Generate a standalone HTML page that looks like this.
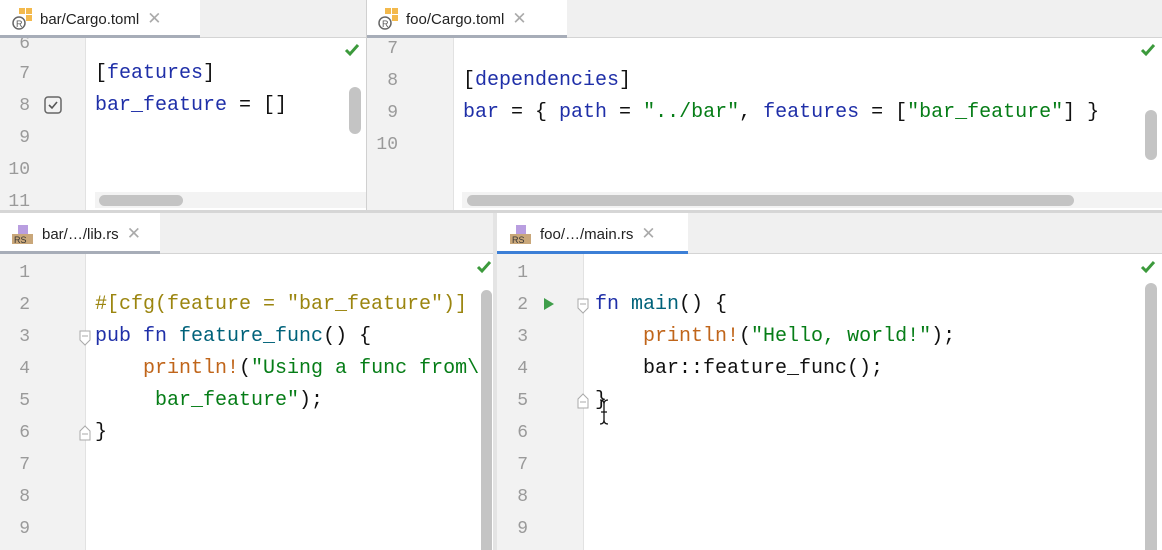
<!DOCTYPE html>
<html><head><meta charset="utf-8"><style>
*{margin:0;padding:0;box-sizing:border-box}
html,body{width:1162px;height:550px;overflow:hidden}
body{background:#fff;position:relative;font-family:"Liberation Sans",sans-serif}
.a{position:absolute}
.tabbar{background:#f0f0f0;border-bottom:1px solid #d4d4d4}
.tab{position:absolute;font-size:15px;color:#222;display:flex;align-items:center}
.gut{background:#f2f2f2;border-right:1px solid #e2e2e2}
.ln{position:absolute;font-family:"Liberation Mono",monospace;font-size:18px;color:#9a9a9a;text-align:right;width:30px;line-height:32px}
.code{position:absolute;font-family:"Liberation Mono",monospace;font-size:20px;line-height:32px;white-space:pre;color:#111}
.k{color:#1f2fa8}.f{color:#00627a}.s{color:#067d17}.m{color:#c0651a}.at{color:#9b850f}
.thumb{position:absolute;background:#c4c4c4;border-radius:6px}
.x{color:#aaa;font-size:17px;margin-left:8px}
.chk{position:absolute}
</style></head><body>
<div class="a tabbar" style="left:0;top:0;width:1162px;height:38px"></div>
<div class="a" style="left:0;top:0;width:200px;height:38px;background:#fff;border-bottom:3px solid #a7adb8"></div>
<div class="a" style="left:366px;top:0;width:201px;height:38px;background:#fff;border-bottom:3px solid #a7adb8"></div>
<div class="a" style="left:366px;top:0;width:1px;height:210px;background:#d0d0d0"></div>
<div class="tab" style="left:12px;top:8px"><svg width="22" height="22"><rect x="7" y="0" width="6" height="6" fill="#f3b94c"/><rect x="14" y="0" width="6" height="6" fill="#f3b94c"/><rect x="14" y="7" width="6" height="6" fill="#f3b94c"/><circle cx="7" cy="15" r="6" fill="#fff" stroke="#666" stroke-width="1.5"/><text x="4" y="19" font-size="9" fill="#555" font-family="Liberation Sans">R</text></svg><span style="margin-left:6px">bar/Cargo.toml</span><span class="x">✕</span></div>
<div class="tab" style="left:378px;top:8px"><svg width="22" height="22"><rect x="7" y="0" width="6" height="6" fill="#f3b94c"/><rect x="14" y="0" width="6" height="6" fill="#f3b94c"/><rect x="14" y="7" width="6" height="6" fill="#f3b94c"/><circle cx="7" cy="15" r="6" fill="#fff" stroke="#666" stroke-width="1.5"/><text x="4" y="19" font-size="9" fill="#555" font-family="Liberation Sans">R</text></svg><span style="margin-left:6px">foo/Cargo.toml</span><span class="x">✕</span></div>

<div class="a gut" style="left:0;top:38px;width:86px;height:172px"></div>
<div class="a" style="left:0;top:38px;width:366px;height:172px;overflow:hidden">
 <div class="ln" style="left:0;top:-10px">6</div>
 <div class="ln" style="left:0;top:20px">7</div>
 <div class="ln" style="left:0;top:52px">8</div>
 <div class="ln" style="left:0;top:84px">9</div>
 <div class="ln" style="left:0;top:116px">10</div>
 <div class="ln" style="left:0;top:148px">11</div>
</div>
<svg class="a" style="left:44px;top:96px" width="19" height="19"><rect x="1" y="1" width="16" height="16" rx="3" fill="none" stroke="#666" stroke-width="1.5"/><path d="M5 9l3 3 5-6" fill="none" stroke="#555" stroke-width="1.6"/></svg>
<div class="code" style="left:95px;top:58px">[<span class="k">features</span>]
<span class="k">bar_feature</span> = []</div>
<svg class="chk" style="left:344px;top:43px" width="16" height="14"><path d="M2 7l4 4 8-9" fill="none" stroke="#3c9a3c" stroke-width="3"/></svg>
<div class="thumb" style="left:349px;top:87px;width:12px;height:47px"></div>
<div class="a" style="left:95px;top:192px;width:271px;height:16px;background:#f3f3f3"></div>
<div class="thumb" style="left:99px;top:195px;width:84px;height:11px"></div>

<div class="a gut" style="left:367px;top:38px;width:87px;height:172px"></div>
<div class="a" style="left:367px;top:38px;width:87px;height:172px;overflow:hidden">
<div class="ln" style="left:1px;top:-5px">7</div>
<div class="ln" style="left:1px;top:27px">8</div>
<div class="ln" style="left:1px;top:59px">9</div>
<div class="ln" style="left:1px;top:91px">10</div>
</div>
<div class="code" style="left:463px;top:65px">[<span class="k">dependencies</span>]
<span class="k">bar</span> = { <span class="k">path</span> = <span class="s">"../bar"</span>, <span class="k">features</span> = [<span class="s">"bar_feature"</span>] }</div>
<svg class="chk" style="left:1140px;top:43px" width="16" height="14"><path d="M2 7l4 4 8-9" fill="none" stroke="#3c9a3c" stroke-width="3"/></svg>
<div class="thumb" style="left:1145px;top:110px;width:12px;height:50px"></div>
<div class="a" style="left:462px;top:192px;width:700px;height:16px;background:#f3f3f3"></div>
<div class="thumb" style="left:467px;top:195px;width:607px;height:11px"></div>

<div class="a" style="left:0;top:210px;width:1162px;height:3px;background:#d6d6d6"></div>

<div class="a tabbar" style="left:0;top:213px;width:1162px;height:41px"></div>
<div class="a" style="left:0;top:213px;width:160px;height:41px;background:#fff;border-bottom:3px solid #a7adb8"></div>
<div class="a" style="left:497px;top:213px;width:191px;height:41px;background:#fff;border-bottom:3px solid #3c7fd6"></div>
<div class="a" style="left:493px;top:213px;width:4px;height:337px;background:#e4e4e4"></div>
<div class="tab" style="left:12px;top:223px"><svg width="22" height="22"><rect x="6" y="2" width="10" height="9" fill="#b99ee0"/><rect x="0" y="11" width="21" height="10" fill="#c9a77a"/><text x="2" y="20" font-size="9" fill="#333" font-family="Liberation Sans">RS</text></svg><span style="margin-left:8px">bar/…/lib.rs</span><span class="x">✕</span></div>
<div class="tab" style="left:510px;top:223px"><svg width="22" height="22"><rect x="6" y="2" width="10" height="9" fill="#b99ee0"/><rect x="0" y="11" width="21" height="10" fill="#c9a77a"/><text x="2" y="20" font-size="9" fill="#333" font-family="Liberation Sans">RS</text></svg><span style="margin-left:8px">foo/…/main.rs</span><span class="x">✕</span></div>

<div class="a gut" style="left:0;top:254px;width:86px;height:296px"></div>
<div class="ln" style="left:0;top:257px">1</div>
<div class="ln" style="left:0;top:289px">2</div>
<div class="ln" style="left:0;top:321px">3</div>
<div class="ln" style="left:0;top:353px">4</div>
<div class="ln" style="left:0;top:385px">5</div>
<div class="ln" style="left:0;top:417px">6</div>
<div class="ln" style="left:0;top:449px">7</div>
<div class="ln" style="left:0;top:481px">8</div>
<div class="ln" style="left:0;top:513px">9</div>
<svg class="a" style="left:79px;top:330px" width="13" height="16"><path d="M1 1h10v9l-5 5-5-5z" fill="#fff" stroke="#aaa"/><path d="M3 6h6" stroke="#aaa"/></svg>
<svg class="a" style="left:79px;top:425px" width="13" height="16"><path d="M1 15h10V6L6 1 1 6z" fill="#fff" stroke="#aaa"/><path d="M3 9h6" stroke="#aaa"/></svg>
<div class="code" style="left:95px;top:289px"><span class="at">#[cfg(feature = "bar_feature")]</span>
<span class="k">pub fn</span> <span class="f">feature_func</span>() {
    <span class="m">println!</span>(<span class="s">"Using a func from\</span>
<span class="s">     bar_feature"</span>);
}</div>
<svg class="chk" style="left:476px;top:260px" width="16" height="14"><path d="M2 7l4 4 8-9" fill="none" stroke="#3c9a3c" stroke-width="3"/></svg>
<div class="thumb" style="left:481px;top:290px;width:11px;height:270px"></div>

<div class="a gut" style="left:497px;top:254px;width:87px;height:296px"></div>
<div class="ln" style="left:498px;top:257px">1</div>
<div class="ln" style="left:498px;top:289px">2</div>
<div class="ln" style="left:498px;top:321px">3</div>
<div class="ln" style="left:498px;top:353px">4</div>
<div class="ln" style="left:498px;top:385px">5</div>
<div class="ln" style="left:498px;top:417px">6</div>
<div class="ln" style="left:498px;top:449px">7</div>
<div class="ln" style="left:498px;top:481px">8</div>
<div class="ln" style="left:498px;top:513px">9</div>
<svg class="a" style="left:543px;top:297px" width="12" height="14"><path d="M1 1l10 6-10 6z" fill="#3f9e4a"/></svg>
<svg class="a" style="left:577px;top:298px" width="13" height="16"><path d="M1 1h10v9l-5 5-5-5z" fill="#fff" stroke="#aaa"/><path d="M3 6h6" stroke="#aaa"/></svg>
<svg class="a" style="left:577px;top:393px" width="13" height="16"><path d="M1 15h10V6L6 1 1 6z" fill="#fff" stroke="#aaa"/><path d="M3 9h6" stroke="#aaa"/></svg>
<div class="code" style="left:595px;top:289px"><span class="k">fn</span> <span class="f">main</span>() {
    <span class="m">println!</span>(<span class="s">"Hello, world!"</span>);
    bar::feature_func();
}</div>
<svg class="a" style="left:598px;top:399px" width="12" height="26"><path d="M2 1q4 0 4 4v16q0 4 4 4M10 1q-4 0-4 4M6 21q0 4-4 4M3 13h6" fill="none" stroke="#111" stroke-width="1.3"/></svg>
<svg class="chk" style="left:1140px;top:260px" width="16" height="14"><path d="M2 7l4 4 8-9" fill="none" stroke="#3c9a3c" stroke-width="3"/></svg>
<div class="thumb" style="left:1145px;top:283px;width:12px;height:280px"></div>
</body></html>
